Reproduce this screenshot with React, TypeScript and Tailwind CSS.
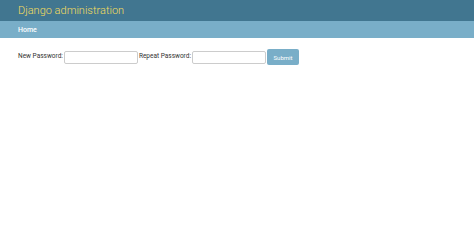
export default function App() {
  return (
    <div className="min-h-[251px] bg-white" style={{ fontFamily: 'Roboto, "Liberation Sans", sans-serif' }}>
      {/* header */}
      <div className="flex h-[21px] items-center bg-[#417690] px-[18px]">
        <span className="text-[11px] font-light leading-none text-[#f5dd5d]">Django administration</span>
      </div>
      {/* breadcrumbs */}
      <div className="flex h-[17px] items-center bg-[#79aec8] px-[18px] pt-[2px]">
        <span className="text-[7px] font-medium leading-none text-white">Home</span>
      </div>
      {/* content */}
      <div className="px-[18px] pt-[11px]">
        <form className="flex items-center text-[6.5px] text-[#333]">
          <label className="mr-[1px]">New Password:</label>
          <input type="password" className="h-[13px] w-[74px] rounded-[2px] border border-[#ccc] bg-white" />
          <label className="ml-[1px] mr-[1px]">Repeat Password:</label>
          <input type="password" className="h-[13px] w-[74px] rounded-[2px] border border-[#ccc] bg-white" />
          <button type="submit" className="ml-[1px] h-[16px] w-[32px] rounded-[2px] bg-[#79aec8] text-[6px] text-white">
            Submit
          </button>
        </form>
      </div>
    </div>
  )
}
